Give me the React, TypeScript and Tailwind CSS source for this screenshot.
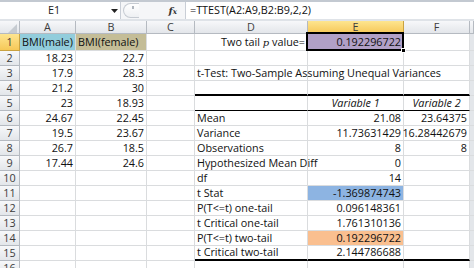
import React from 'react';

type Cell = {
  v?: React.ReactNode;
  align?: 'l' | 'r' | 'c';
  bg?: string;
  italic?: boolean;
  border?: string;
  sel?: boolean;
};

const cols = ['A', 'B', 'C', 'D', 'E', 'F', ''];

// rows 1..16, columns A..F
const rows: Cell[][] = [
  [
    { v: 'BMI(male)', align: 'l', bg: 'bg-[#92cddc]' },
    { v: 'BMI(female)', align: 'l', bg: 'bg-[#c4bd97]' },
    {},
    {
      v: (
        <>
          Two tail <span className="italic font-['DejaVu_Serif',serif] text-[10px]">p</span> value=
        </>
      ),
      align: 'r',
    },
    { v: '0.192296722', align: 'r', bg: 'bg-[#b1a0c7]', sel: true },
    {},
  ],
  [{ v: '18.23', align: 'r' }, { v: '22.7', align: 'r' }, {}, {}, {}, {}],
  [
    { v: '17.9', align: 'r' },
    { v: '28.3', align: 'r' },
    {},
    { v: 't-Test: Two-Sample Assuming Unequal Variances', align: 'l' },
    {},
    {},
  ],
  [
    { v: '21.2', align: 'r' },
    { v: '30', align: 'r' },
    {},
    { border: 'border-b-2 border-b-black' },
    { border: 'border-b-2 border-b-black' },
    { border: 'border-b-2 border-b-black' },
  ],
  [
    { v: '23', align: 'r' },
    { v: '18.93', align: 'r' },
    {},
    { border: 'border-b-black' },
    { v: 'Variable 1', align: 'c', italic: true, border: 'border-b-black' },
    { v: 'Variable 2', align: 'c', italic: true, border: 'border-b-black' },
  ],
  [
    { v: '24.67', align: 'r' },
    { v: '22.45', align: 'r' },
    {},
    { v: 'Mean', align: 'l' },
    { v: '21.08', align: 'r' },
    { v: '23.64375', align: 'r' },
  ],
  [
    { v: '19.5', align: 'r' },
    { v: '23.67', align: 'r' },
    {},
    { v: 'Variance', align: 'l' },
    { v: '11.73631429', align: 'r' },
    { v: '16.28442679', align: 'r' },
  ],
  [
    { v: '26.7', align: 'r' },
    { v: '18.5', align: 'r' },
    {},
    { v: 'Observations', align: 'l' },
    { v: '8', align: 'r' },
    { v: '8', align: 'r' },
  ],
  [
    { v: '17.44', align: 'r' },
    { v: '24.6', align: 'r' },
    {},
    { v: 'Hypothesized Mean Diff', align: 'l' },
    { v: '0', align: 'r' },
    {},
  ],
  [{}, {}, {}, { v: 'df', align: 'l' }, { v: '14', align: 'r' }, {}],
  [{}, {}, {}, { v: 't Stat', align: 'l' }, { v: '-1.369874743', align: 'r', bg: 'bg-[#8db4e2]' }, {}],
  [{}, {}, {}, { v: 'P(T<=t) one-tail', align: 'l' }, { v: '0.096148361', align: 'r' }, {}],
  [{}, {}, {}, { v: 't Critical one-tail', align: 'l' }, { v: '1.761310136', align: 'r' }, {}],
  [{}, {}, {}, { v: 'P(T<=t) two-tail', align: 'l' }, { v: '0.192296722', align: 'r', bg: 'bg-[#fabf8f]' }, {}],
  [
    {},
    {},
    {},
    { v: 't Critical two-tail', align: 'l', border: 'border-b-2 border-b-black' },
    { v: '2.144786688', align: 'r', border: 'border-b-2 border-b-black' },
    { border: 'border-b-2 border-b-black' },
  ],
  [{}, {}, {}, {}, {}, {}],
];

const headCls =
  'flex items-center justify-center border-r border-b border-[#b5bac1] bg-gradient-to-b from-[#f7f8fa] to-[#e3e6ea] text-[#3c3c3c]';
const selHeadCls =
  'flex items-center justify-center border-r border-b border-[#c9a240] bg-gradient-to-b from-[#fde58f] to-[#f6c857] text-[#3c3c3c]';

function DataCell({ c }: { c: Cell }) {
  const justify = c.align === 'r' ? 'justify-end' : c.align === 'c' ? 'justify-center' : 'justify-start';
  return (
    <div
      className={`relative flex items-center px-[2px] border-r border-b border-[#dadcde] whitespace-nowrap ${justify} ${
        c.bg ?? 'bg-white'
      } ${c.italic ? 'italic' : ''} ${c.border ?? ''}`}
    >
      {c.v !== undefined && <span className="relative z-10">{c.v}</span>}
      {c.sel && (
        <>
          <div className="absolute -left-[2px] -top-[2px] -right-[1px] -bottom-[1px] border-2 border-black z-20" />
          <div className="absolute -right-[3px] -bottom-[3px] w-[5px] h-[5px] bg-black border border-white z-30" />
        </>
      )}
    </div>
  );
}

export default function App() {
  return (
    <div className="w-[474px] h-[268px] overflow-hidden bg-[#dfe3e8] font-['Open_Sans',sans-serif] text-[10.8px] text-[#111]">
      <div className="h-[2px] bg-[#c3c9d1]" />
      {/* formula bar */}
      <div className="flex h-[17px] bg-white">
        <div className="w-[108px] flex items-center justify-center text-[#222]">E1</div>
        <div className="w-[12px] flex items-center justify-center">
          <svg width="7" height="4" viewBox="0 0 7 4">
            <path d="M0 0h7L3.5 4z" fill="#222" />
          </svg>
        </div>
        <div className="w-px bg-[#c9ced6]" />
        <div className="flex-none w-[64px] flex items-center bg-[#f5f6f8] relative">
          <div className="ml-[2px] w-[16px] h-[15px] rounded-l-full border border-r-0 border-[#c6cbd2] bg-gradient-to-b from-white to-[#eef0f3] flex items-center justify-center">
            <div className="w-[2px] h-[3px] bg-[#b0b6be] ml-[3px] -mt-[6px]" />
          </div>
          <span className="ml-auto mr-[8px] italic font-['DejaVu_Serif',serif] text-[10px] font-bold text-[#333]">
            f<span className="text-[7px]">x</span>
          </span>
        </div>
        <div className="w-px bg-[#c9ced6]" />
        <div className="flex-1 flex items-center pl-[4px] text-[#111]">=TTEST(A2:A9,B2:B9,2,2)</div>
      </div>
      <div className="h-[2px] bg-[#dfe3e8]" />
      {/* sheet */}
      <div className="grid grid-cols-[20px_56px_71px_48px_113px_96px_66px_1fr] grid-rows-[13px_17px_repeat(15,15px)] bg-white">
        <div className={headCls}>
          <svg width="9" height="9" viewBox="0 0 9 9" className="ml-[6px] mt-[2px]">
            <path d="M9 0V9H0z" fill="#c6cbd1" />
          </svg>
        </div>
        {cols.map((c, i) => (
          <div key={i} className={c === 'E' ? selHeadCls : headCls}>
            {c}
          </div>
        ))}
        {rows.map((r, ri) => (
          <React.Fragment key={ri}>
            <div className={ri === 0 ? selHeadCls : headCls}>{ri + 1}</div>
            {r.map((c, ci) => (
              <DataCell key={ci} c={c} />
            ))}
            <div className="bg-[#e3e6ea] border-b border-[#dadcde]" />
          </React.Fragment>
        ))}
      </div>
    </div>
  );
}
